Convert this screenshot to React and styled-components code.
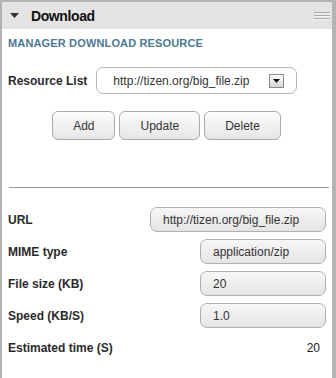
import React from 'react';
import styled, { createGlobalStyle } from 'styled-components';

const GlobalStyle = createGlobalStyle`
  html, body {
    margin: 0;
    padding: 0;
    background: #fff;
  }
  body {
    font-family: "Liberation Sans", Arial, sans-serif;
    color: #222;
  }
`;

const Panel = styled.div`
  box-sizing: border-box;
  width: 336px;
  height: 378px;
  border-top: 2px solid #b3b3b3;
  border-left: 2px solid #b3b3b3;
  border-right: 4px solid #b3b3b3;
  background: #fff;
  overflow: hidden;
`;

const Header = styled.div`
  display: flex;
  align-items: center;
  height: 27px;
  padding: 0 2px 0 8px;
  background: #e4e4e4;
`;

const HeaderTitle = styled.span`
  flex: 1;
  margin-left: 12px;
  font-size: 14px;
  font-weight: bold;
  color: #111;
  letter-spacing: -0.4px;
`;

const Body = styled.div`
  padding: 0 6px;
`;

const SectionTitle = styled.div`
  margin-top: 7px;
  font-size: 11px;
  line-height: 14px;
  font-weight: bold;
  color: #4f7893;
  letter-spacing: 0.15px;
`;

const ListRow = styled.div`
  display: flex;
  align-items: center;
  gap: 9px;
  margin-top: 17px;
`;

const Label = styled.span`
  flex: ${p => (p.$grow ? 1 : 'none')};
  font-size: 12px;
  font-weight: bold;
  color: #2a2a2a;
`;

const Select = styled.div`
  box-sizing: border-box;
  display: flex;
  align-items: center;
  width: 201px;
  height: 27px;
  padding: 0 12px 0 16px;
  border: 1px solid #b5b5b5;
  border-radius: 7px;
  background: #fff;
  font-size: 12px;
  color: #333;
`;

const SelectText = styled.span`
  flex: 1;
`;

const ArrowBox = styled.span`
  box-sizing: border-box;
  display: flex;
  align-items: center;
  justify-content: center;
  width: 15px;
  height: 14px;
  border: 1px solid #8a8a8a;
  background: linear-gradient(#ffffff, #d6d6d6);
`;

const Buttons = styled.div`
  display: flex;
  justify-content: center;
  gap: 4px;
  margin: 17px 0 0 -1px;
`;

const Button = styled.button`
  height: 29px;
  padding: 0 20px;
  border: 1px solid #ababab;
  border-radius: 6px;
  background: linear-gradient(#fdfdfd, #e6e6e6);
  font-family: "Liberation Sans", Arial, sans-serif;
  font-size: 12px;
  color: #333;
`;

const Divider = styled.hr`
  margin: 47px -3px 0 1px;
  border: 0;
  border-top: 1px solid #9c9c9c;
`;

const Fields = styled.div`
  display: flex;
  flex-direction: column;
  gap: 7px;
  margin-top: 19px;
`;

const FieldRow = styled.div`
  display: flex;
  align-items: center;
  height: 25px;
`;

const Field = styled.input`
  box-sizing: border-box;
  width: ${p => p.$width}px;
  height: 25px;
  padding: 0 0 0 12px;
  border: 1px solid #b0b0b0;
  border-radius: 7px;
  background: linear-gradient(#f7f7f7, #e4e4e4);
  font-family: "Liberation Sans", Arial, sans-serif;
  font-size: 12px;
  color: #333;
  outline: none;
`;

const Value = styled.span`
  padding-right: 6px;
  font-size: 12px;
  color: #222;
`;

const Caret = () => (
  <svg width="9" height="6" viewBox="0 0 9 6">
    <path d="M0 0 H9 L4.5 5 Z" fill="#333" />
  </svg>
);

const Grip = () => (
  <svg width="16" height="10" viewBox="0 0 16 10">
    {[0, 3, 6].map(y => (
      <g key={y}>
        <rect x="0" y={y + 1} width="16" height="1" fill="#ababab" />
        <rect x="0" y={y + 2} width="16" height="1" fill="#f2f2f2" />
      </g>
    ))}
  </svg>
);

const SmallArrow = () => (
  <svg width="7" height="4" viewBox="0 0 7 4">
    <path d="M0 0 H7 L3.5 4 Z" fill="#111" />
  </svg>
);

const fields = [
  { label: 'URL', value: 'http://tizen.org/big_file.zip', width: 176 },
  { label: 'MIME type', value: 'application/zip', width: 126 },
  { label: 'File size (KB)', value: '20', width: 126 },
  { label: 'Speed (KB/S)', value: '1.0', width: 126 },
];

export default function App() {
  return (
    <>
      <GlobalStyle />
      <Panel>
        <Header>
          <Caret />
          <HeaderTitle>Download</HeaderTitle>
          <Grip />
        </Header>
        <Body>
          <SectionTitle>MANAGER DOWNLOAD RESOURCE</SectionTitle>
          <ListRow>
            <Label>Resource List</Label>
            <Select>
              <SelectText>http://tizen.org/big_file.zip</SelectText>
              <ArrowBox><SmallArrow /></ArrowBox>
            </Select>
          </ListRow>
          <Buttons>
            <Button>Add</Button>
            <Button>Update</Button>
            <Button>Delete</Button>
          </Buttons>
          <Divider />
          <Fields>
            {fields.map(f => (
              <FieldRow key={f.label}>
                <Label $grow>{f.label}</Label>
                <Field readOnly value={f.value} $width={f.width} />
              </FieldRow>
            ))}
            <FieldRow>
              <Label $grow>Estimated time (S)</Label>
              <Value>20</Value>
            </FieldRow>
          </Fields>
        </Body>
      </Panel>
    </>
  );
}
